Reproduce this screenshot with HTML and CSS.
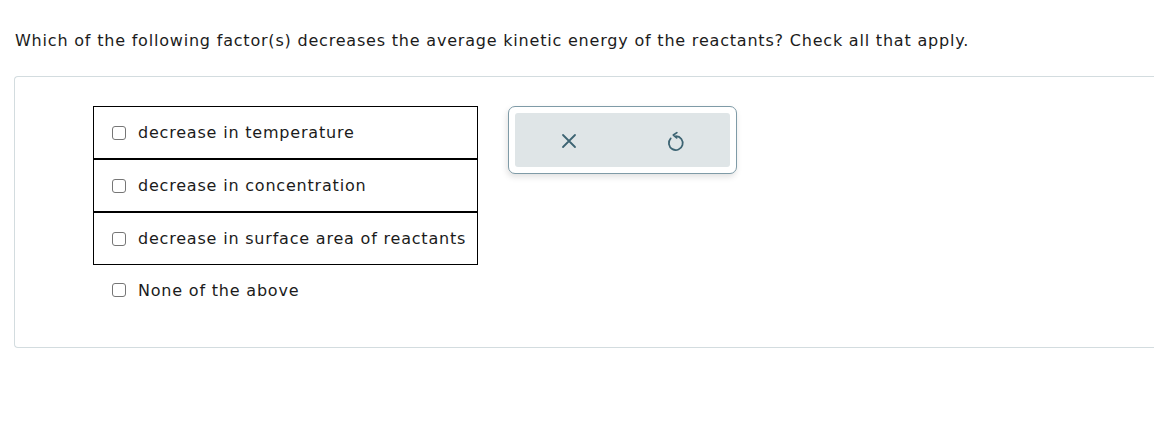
FILE: index.html
```html
<!DOCTYPE html>
<html>
<head>
<meta charset="utf-8">
<link rel="stylesheet" href="styles.css">
</head>
<body>
<div class="page">
  <p class="question">Which of the following factor(s) decreases the average kinetic energy of the reactants? Check all that apply.</p>
  <div class="panel">
    <div class="choices">
      <div class="table">
        <label class="row boxed"><span class="cb"></span><span>decrease in temperature</span></label>
        <label class="row boxed"><span class="cb"></span><span>decrease in concentration</span></label>
        <label class="row boxed"><span class="cb"></span><span>decrease in surface area of reactants</span></label>
      </div>
      <label class="row plain"><span class="cb"></span><span>None of the above</span></label>
    </div>
    <div class="tools">
      <div class="tools-inner">
        <button class="tool" aria-label="Clear">
          <svg width="16" height="16" viewBox="0 0 16 16"><path d="M2 2 L14 14 M14 2 L2 14" stroke="#3d6473" stroke-width="1.8" fill="none" stroke-linecap="round"/></svg>
        </button>
        <button class="tool" aria-label="Undo">
          <svg width="20" height="22" viewBox="0 0 18 20"><path d="M4.2 7.6 A6.3 6.3 0 1 0 9 5.6" stroke="#3d6473" stroke-width="1.6" fill="none" stroke-linecap="round"/><path d="M9.8 2.4 L6.6 4.6 L9.6 7.2" stroke="#3d6473" stroke-width="1.6" fill="none" stroke-linecap="round" stroke-linejoin="round"/></svg>
        </button>
      </div>
    </div>
  </div>
</div>
</body>
</html>
```

FILE: styles.css
```css
html, body {
  margin: 0;
  padding: 0;
  background: #ffffff;
}
body {
  font-family: Verdana, "DejaVu Sans", sans-serif;
  font-size: 16px;
  letter-spacing: 0.8px;
  color: #1b1b1b;
}
.page {
  padding: 31px 0 0 14px;
}
.question {
  margin: 0 0 25px 1px;
  line-height: 20px;
  white-space: nowrap;
}
.panel {
  display: flex;
  align-items: flex-start;
  gap: 30px;
  border: 1px solid #d3dcdf;
  border-right: none;
  border-radius: 4px 0 0 4px;
  padding: 29px 0 32px 78px;
  width: 1140px;
  box-sizing: border-box;
}
.choices {
  width: 385px;
}
.table {
  display: flex;
  flex-direction: column;
}
.row {
  display: flex;
  align-items: center;
  gap: 12px;
  padding-left: 18px;
  white-space: nowrap;
}
.boxed {
  height: 53px;
  box-sizing: border-box;
  border: 1px solid #000;
}
.plain {
  height: 50px;
  padding-left: 19px;
}
.cb {
  width: 14px;
  height: 14px;
  box-sizing: border-box;
  border: 1px solid #767676;
  border-radius: 3px;
  background: #fff;
  flex: none;
}
.tools {
  width: 229px;
  height: 68px;
  box-sizing: border-box;
  border: 1px solid #7f9ba7;
  border-radius: 7px;
  padding: 6px;
  background: #fff;
  box-shadow: -1px 3px 6px rgba(0, 0, 0, 0.12);
}
.tools-inner {
  display: flex;
  height: 100%;
  background: #dfe5e7;
  border-radius: 3px;
}
.tool {
  flex: 1;
  border: none;
  background: transparent;
  display: flex;
  align-items: center;
  justify-content: center;
  padding: 0;
  padding-top: 2px;
}
```
